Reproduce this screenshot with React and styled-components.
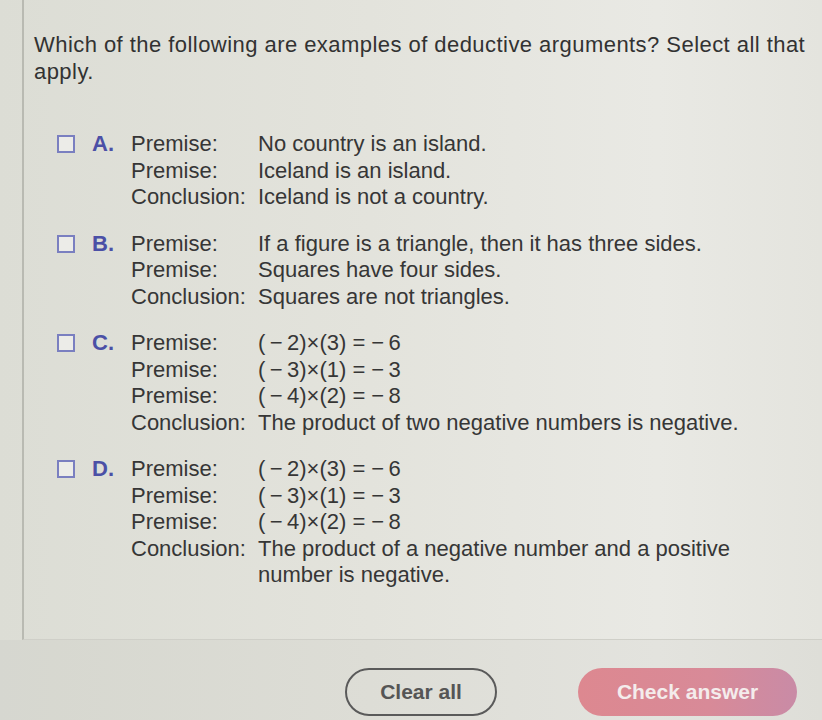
import React from "react";
import styled, { createGlobalStyle } from "styled-components";

const Global = createGlobalStyle`
  html, body { margin: 0; padding: 0; }
  body {
    width: 822px;
    height: 720px;
    overflow: hidden;
    font-family: "Liberation Sans", Arial, sans-serif;
    background: linear-gradient(90deg, #dcddd5 0%, #e3e3dc 45%, #e9e9e4 80%, #e4e4de 100%);
    color: #333;
  }
`;

const Page = styled.div`
  display: flex;
  flex-direction: column;
  height: 720px;
`;

const Main = styled.div`
  height: 640px;
  box-sizing: border-box;
  margin-left: 22px;
  border-left: 2px solid #b9bab2;
  border-bottom: 1px solid #cfcfc8;
  padding: 31px 0 0 10px;
`;

const Question = styled.p`
  margin: 0;
  font-size: 22px;
  line-height: 27px;
  letter-spacing: 0.45px;
  width: 785px;
  color: #323232;
`;

const Options = styled.div`
  margin-top: 46px;
  display: flex;
  flex-direction: column;
  gap: 20px;
`;

const Option = styled.div`
  display: grid;
  grid-template-columns: 35px 39px 1fr;
  grid-template-rows: 26px auto;
  align-items: start;
  padding-left: 23px;
`;

const Box = styled.span`
  display: block;
  box-sizing: border-box;
  width: 18px;
  height: 18px;
  margin-top: 4px;
  border: 2px solid #7a7fc0;
  background: #ecece8;
`;

const Letter = styled.span`
  font-size: 22px;
  line-height: 26px;
  font-weight: bold;
  color: #4b50a6;
`;

const Lines = styled.div`
  grid-row: span 2;
  display: grid;
  grid-template-columns: 127px 500px;
  grid-auto-rows: 26.5px;
  font-size: 22px;
  line-height: 26.5px;
  color: #363636;
`;

const Label = styled.span``;
const Value = styled.span``;

const Footer = styled.div`
  flex: 1;
  display: flex;
  justify-content: flex-end;
  align-items: flex-end;
  gap: 81px;
  padding: 0 25px 4px 0;
  background: rgba(0, 0, 0, 0.025);
`;

const Button = styled.button`
  height: 48px;
  border-radius: 24px;
  font-family: "Liberation Sans", Arial, sans-serif;
  font-size: 21px;
  font-weight: bold;
  padding: 0;
  cursor: pointer;
`;

const ClearButton = styled(Button)`
  width: 152px;
  background: transparent;
  border: 2px solid #5a5a5a;
  color: #555;
`;

const CheckButton = styled(Button)`
  width: 219px;
  border: none;
  color: #f4ecec;
  background: linear-gradient(90deg, #dd8890 0%, #d88a98 60%, #c98ba6 100%);
`;

const mathRows = [
  ["Premise:", "(\u2009\u2212\u20092)\u00d7(3) = \u2212\u20096"],
  ["Premise:", "(\u2009\u2212\u20093)\u00d7(1) = \u2212\u20093"],
  ["Premise:", "(\u2009\u2212\u20094)\u00d7(2) = \u2212\u20098"],
];

const options = [
  {
    letter: "A.",
    rows: [
      ["Premise:", "No country is an island."],
      ["Premise:", "Iceland is an island."],
      ["Conclusion:", "Iceland is not a country."],
    ],
  },
  {
    letter: "B.",
    rows: [
      ["Premise:", "If a figure is a triangle, then it has three sides."],
      ["Premise:", "Squares have four sides."],
      ["Conclusion:", "Squares are not triangles."],
    ],
  },
  {
    letter: "C.",
    rows: [
      ...mathRows,
      ["Conclusion:", "The product of two negative numbers is negative."],
    ],
  },
  {
    letter: "D.",
    rows: [
      ...mathRows,
      [
        "Conclusion:",
        "The product of a negative number and a positive number is negative.",
      ],
    ],
  },
];

export default function App() {
  return (
    <Page>
      <Global />
      <Main>
        <Question>
          Which of the following are examples of deductive arguments? Select all
          that apply.
        </Question>
        <Options>
          {options.map((o) => (
            <Option key={o.letter}>
              <Box />
              <Letter>{o.letter}</Letter>
              <Lines>
                {o.rows.map(([l, v], i) => (
                  <React.Fragment key={i}>
                    <Label>{l}</Label>
                    <Value>{v}</Value>
                  </React.Fragment>
                ))}
              </Lines>
            </Option>
          ))}
        </Options>
      </Main>
      <Footer>
        <ClearButton>Clear all</ClearButton>
        <CheckButton>Check answer</CheckButton>
      </Footer>
    </Page>
  );
}
